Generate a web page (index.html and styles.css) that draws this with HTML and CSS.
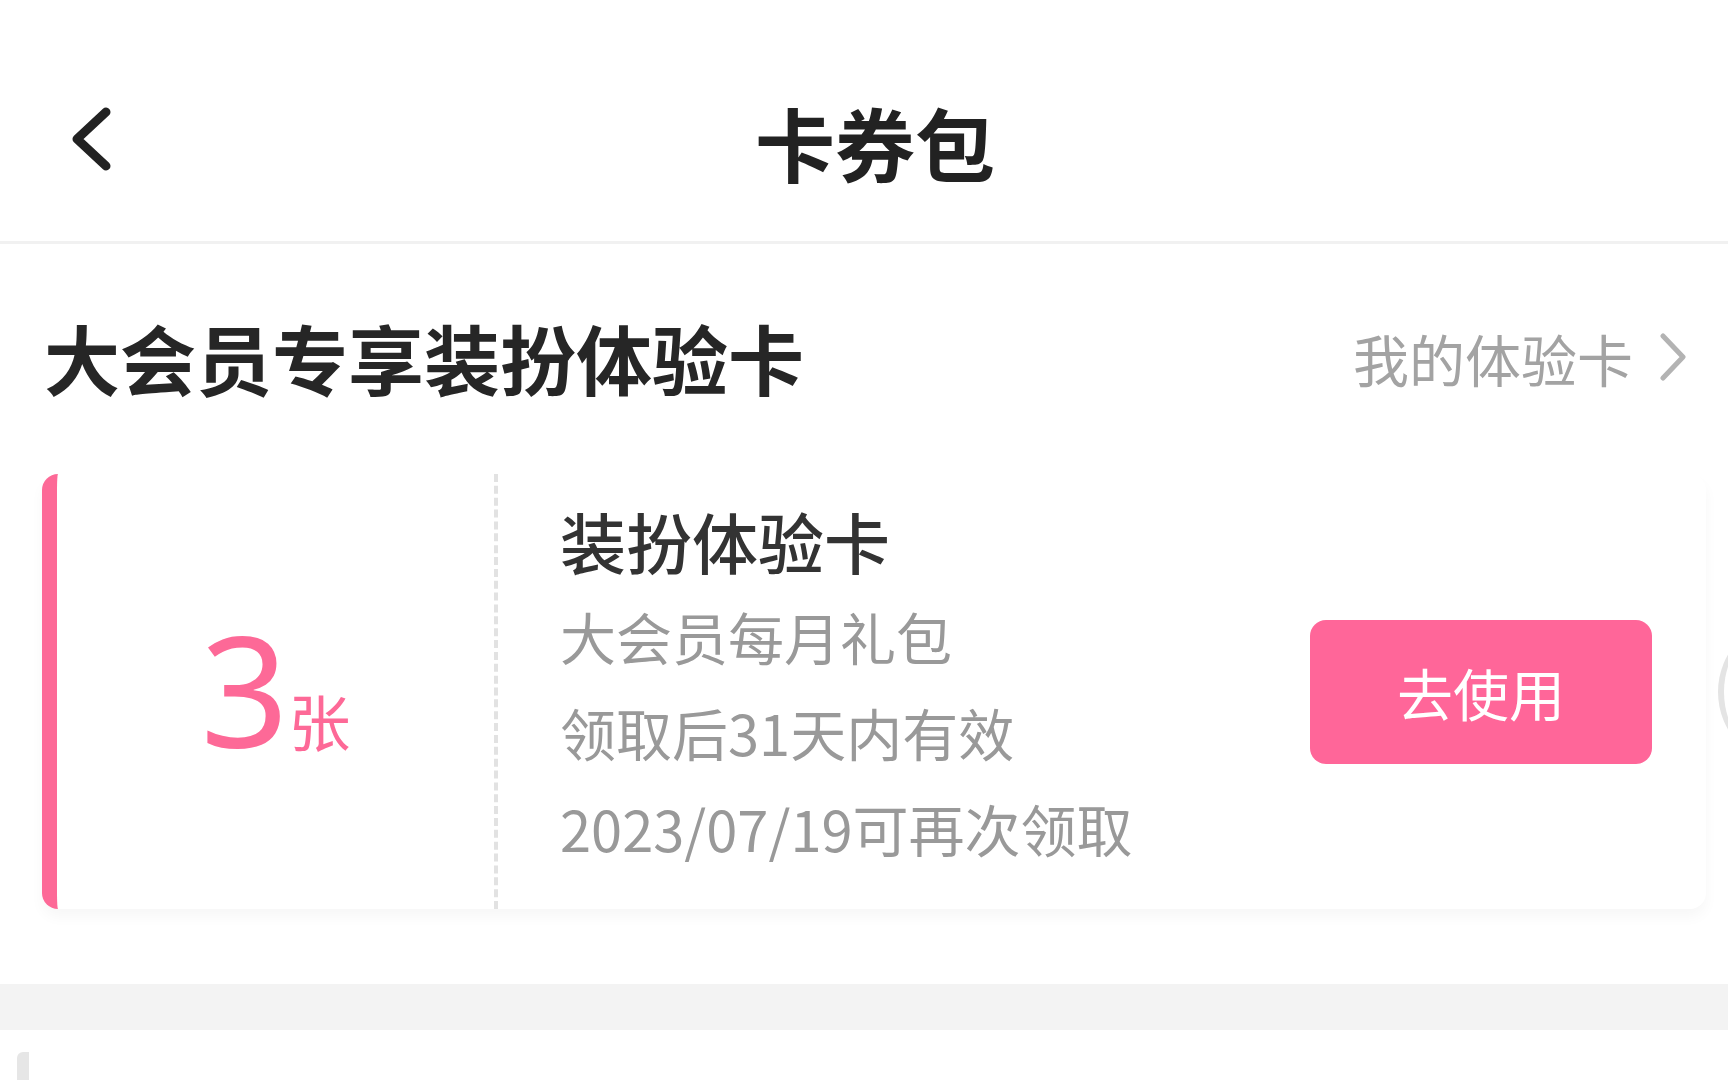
FILE: index.html
```html
<!DOCTYPE html>
<html lang="zh-CN">
  <head>
    <meta charset="utf-8">
    <meta name="viewport" content="width=device-width, initial-scale=1">
    <title>卡券包</title>
    <link rel="stylesheet" href="styles.css">
  </head>
  <body>
    <div class='header'>
        <div class='back'>
            <svg width="42" height="64" viewBox="0 0 42 64">
                <path d="M36 5 L7 32 L36 59" fill="none" stroke="#222" stroke-width="9" stroke-linecap="round" stroke-linejoin="round"/>
            </svg>
        </div>
        <div class='title'>卡券包</div>
        <div class='spacer'></div>
    </div>
    <div class='section'>
        <div class='section-head'>
            <div class='section-title'>大会员专享装扮体验卡</div>
            <div class='more'>
                <span>我的体验卡</span>
                <svg width="28" height="48" viewBox="0 0 28 48">
                    <path d="M4 3 L24 24 L4 45" fill="none" stroke="#b3b3b3" stroke-width="5" stroke-linecap="round" stroke-linejoin="round"/>
                </svg>
            </div>
        </div>
        <div class='tickets'>
            <div class='ticket'>
                <div class='ticket-left'>
                    <span class='count'>3</span><span class='unit'>张</span>
                </div>
                <div class='ticket-info'>
                    <div class='ticket-name'>装扮体验卡</div>
                    <div class='ticket-line'>大会员每月礼包</div>
                    <div class='ticket-line'>领取后31天内有效</div>
                    <div class='ticket-line'>2023/07/19可再次领取</div>
                </div>
                <div class='use'>去使用</div>
            </div>
            <div class='peek'></div>
        </div>
    </div>
    <div class='band'></div>
    <div class='next'>
        <div class='next-bar'></div>
    </div>
  </body>
</html>
```

FILE: styles.css
```css
body {
    margin: 0;
    background-color: #fff;
    font-family: "Noto Sans CJK SC", "Noto Sans", sans-serif;
    overflow: hidden;
}
.header {
    display: flex;
    align-items: center;
    height: 191px;
    padding-top: 50px;
    border-bottom: 3px solid #f1f1f1;
}
.back {
    width: 200px;
    box-sizing: border-box;
    padding-left: 70px;
    margin-bottom: 14px;
    display: flex;
}
.title {
    flex: 1;
    text-align: center;
    font-size: 80px;
    font-weight: bold;
    color: #222;
    line-height: 1;
    margin-bottom: 10px;
}
.spacer {
    width: 178px;
}
.section {
    padding-top: 68px;
}
.section-head {
    display: flex;
    justify-content: space-between;
    align-items: center;
    height: 90px;
    padding: 0 41px 0 44px;
    margin-bottom: 72px;
}
.section-title {
    font-size: 76px;
    font-weight: bold;
    color: #262626;
    line-height: 90px;
}
.more {
    display: flex;
    align-items: center;
    gap: 26px;
    font-size: 56px;
    color: #a3a3a3;
}
.tickets {
    display: flex;
    align-items: center;
    gap: 12px;
    padding: 0 0 20px 42px;
    overflow: hidden;
}
.ticket {
    display: flex;
    flex-shrink: 0;
    width: 1664px;
    background-color: #fff;
    border-radius: 16px;
    box-shadow: 0 8px 14px rgba(0,0,0,0.035);
}
.ticket-left {
    width: 456px;
    box-sizing: border-box;
    border-left: 15px solid #fd6997;
    border-right: 4px dashed #e2e2e2;
    border-radius: 16px 0 0 16px;
    display: flex;
    justify-content: center;
    align-items: baseline;
    padding-top: 136px;
    color: #fd6997;
}
.count {
    font-size: 154px;
    line-height: 1;
    font-family: "Noto Sans", sans-serif;
}
.unit {
    font-size: 62px;
}
.ticket-info {
    flex: 1;
    padding: 18px 0 33px 62px;
}
.ticket-name {
    font-size: 66px;
    font-weight: 500;
    color: #333;
    line-height: 96px;
}
.ticket-line {
    font-size: 56px;
    color: #999;
    line-height: 96px;
}
.use {
    align-self: center;
    width: 342px;
    height: 144px;
    margin-right: 54px;
    border-radius: 16px;
    background-color: #ff6699;
    color: #fff;
    font-size: 56px;
    display: flex;
    justify-content: center;
    align-items: center;
}
.peek {
    flex-shrink: 0;
    width: 150px;
    height: 150px;
    border-radius: 50%;
    box-sizing: border-box;
    border-left: 6px solid #e4e4e4;
}
.band {
    height: 46px;
    margin-top: 55px;
    background-color: #f3f3f3;
}
.next {
    padding: 22px 0 0 17px;
}
.next-bar {
    width: 12px;
    height: 60px;
    border-radius: 6px 0 0 0;
    background-color: #e6e6e6;
}
```
